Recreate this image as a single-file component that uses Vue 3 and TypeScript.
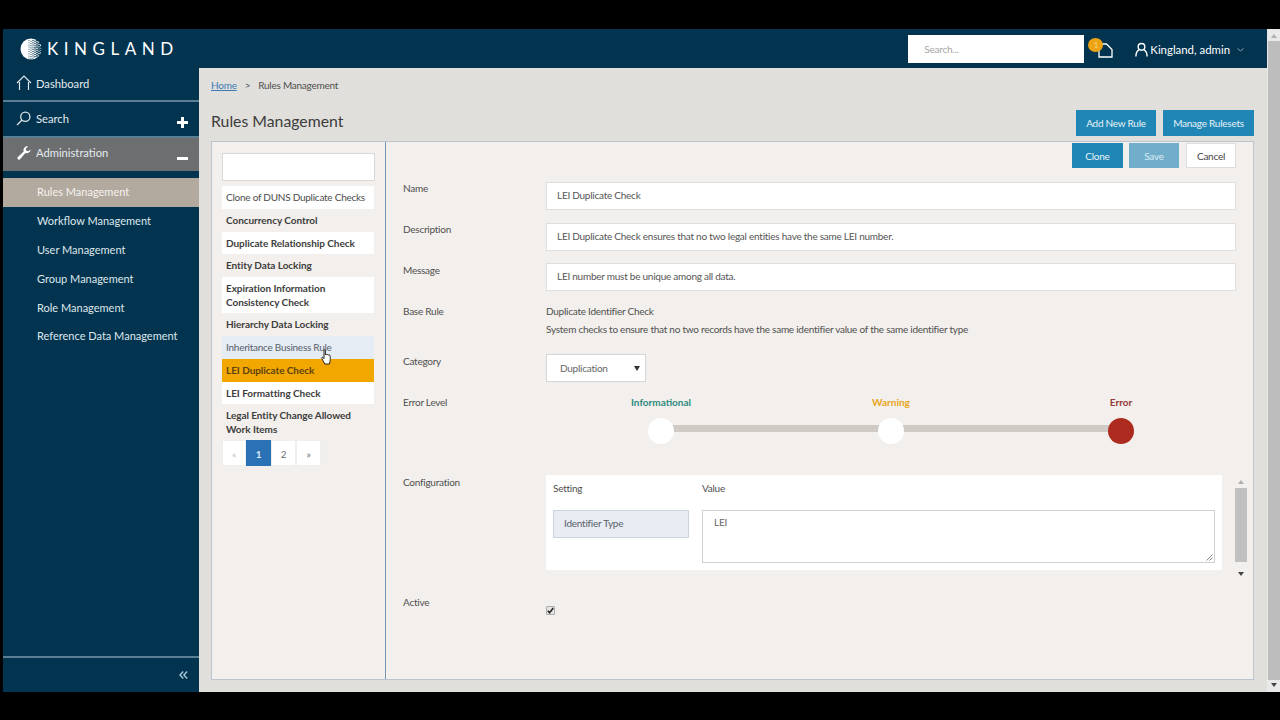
<template>
  <div class="screen">
    <div class="window">
      <header class="topbar">
        <div class="logo">
          <svg class="globe" width="22" height="22" viewBox="0 0 22 22">
            <circle cx="11" cy="11" r="10.500" fill="#fff" />
            <g fill="#02344f">
              <template v-for="d in globeDots" :key="d.k">
                <circle :cx="d.x" :cy="d.y" :r="d.r" />
              </template>
            </g>
          </svg>
          <span class="logo-text">KINGLAND</span>
        </div>
        <div class="top-right">
          <div class="top-search">Search...</div>
          <div class="notice">
            <svg class="doc" width="15" height="15" viewBox="0 0 15 15" fill="none" stroke="#fff" stroke-width="1.300">
              <path d="M1 14V1h7.500L14 6.500V14z" />
            </svg>
            <span class="badge">1</span>
          </div>
          <div class="user">
            <svg width="13" height="16" viewBox="0 0 14 16" fill="none" stroke="#fff" stroke-width="1.500">
              <circle cx="7" cy="4.600" r="3.600" />
              <path d="M1 15c0-4 2-6.500 3.600-7.300M13 15c0-4-2-6.500-3.600-7.300" />
            </svg>
            <span>Kingland, admin</span>
            <svg class="caret" width="7" height="4" viewBox="0 0 7 4" fill="none" stroke="#8ba3b2">
              <path d="M.5.5l3 2.500 3-2.500" />
            </svg>
          </div>
        </div>
      </header>

      <div class="body">
        <aside class="sidebar">
          <div class="nav-row nav-dash">
            <svg width="16" height="16" viewBox="0 0 16 16" fill="none" stroke="#dfe7ec" stroke-width="1.200">
              <path d="M1 8l7-7 7 7M3.500 7v8M12.500 7v8" />
            </svg>
            <span>Dashboard</span>
          </div>
          <div class="nav-row nav-search">
            <svg width="15" height="15" viewBox="0 0 15 15" fill="none" stroke="#dfe7ec" stroke-width="1.300">
              <circle cx="9.300" cy="5.700" r="4.600" />
              <path d="M6 9L1 14" />
            </svg>
            <span>Search</span>
            <b class="sign plus"></b>
          </div>
          <div class="nav-row nav-admin">
            <svg width="14" height="14" viewBox="0 0 14 14" fill="#fff">
              <path d="M13.600 3.400a3.900 3.900 0 0 1-5.200 3.700l-5.100 6a1.600 1.600 0 0 1-2.400-2.200l5.800-5.300A3.900 3.900 0 0 1 11 .4L8.800 2.700l.5 2 2 .5z" />
            </svg>
            <span>Administration</span>
            <b class="sign"></b>
          </div>
          <nav class="subnav">
            <a v-for="item in adminItems" :key="item" class="sub-item" :class="{ current: item === 'Rules Management' }">{{ item }}</a>
          </nav>
          <div class="side-foot">
            <svg width="9" height="8" viewBox="0 0 9 8" fill="none" stroke="#a9c7d8" stroke-width="1.400">
              <path d="M4.300.6L1 4l3.300 3.400M8.200.6L4.900 4l3.300 3.400" />
            </svg>
          </div>
        </aside>

        <main class="main">
          <div class="crumbs">
            <a>Home</a>
            <span class="sep">&gt;</span>
            <span>Rules Management</span>
          </div>
          <div class="title-row">
            <h1>Rules Management</h1>
            <div class="title-btns">
              <button class="btn primary wide add">Add New Rule</button>
              <button class="btn primary wide manage">Manage Rulesets</button>
            </div>
          </div>

          <section class="panel">
            <div class="rule-list">
              <div class="list-search"></div>
              <div
                v-for="(rule, i) in rules"
                :key="rule.name"
                class="rule"
                :class="[rule.state, i % 2 === 0 ? 'odd' : '']"
              >{{ rule.name }}</div>
              <div class="pager">
                <span class="page off">«</span>
                <span class="page on">1</span>
                <span class="page">2</span>
                <span class="page">»</span>
              </div>
              <svg class="pointer" width="11" height="16" viewBox="0 0 11 16">
                <path d="M3 1.200c0-.8 1.400-.8 1.400 0V6c.2-.8 1.500-.7 1.600 0 .2-.6 1.400-.6 1.500.2.300-.5 1.400-.4 1.500.4.400 2 .5 5-.6 8.400H3.800C3 13.200 1.500 11 .8 9.400c-.4-.9.600-1.500 1.200-.9L3 9.700z" fill="#fff" stroke="#111" stroke-width=".9" />
              </svg>
            </div>

            <div class="detail">
              <div class="actions">
                <button class="btn primary">Clone</button>
                <button class="btn primary muted">Save</button>
                <button class="btn plain">Cancel</button>
              </div>

              <div class="field f-name">
                <label>Name</label>
                <div class="input">LEI Duplicate Check</div>
              </div>
              <div class="field f-desc">
                <label>Description</label>
                <div class="input">LEI Duplicate Check ensures that no two legal entities have the same LEI number.</div>
              </div>
              <div class="field f-msg">
                <label>Message</label>
                <div class="input">LEI number must be unique among all data.</div>
              </div>
              <div class="field f-base">
                <label>Base Rule</label>
                <div class="base-text">
                  <p>Duplicate Identifier Check</p>
                  <p>System checks to ensure that no two records have the same identifier value of the same identifier type</p>
                </div>
              </div>
              <div class="field f-cat">
                <label>Category</label>
                <div class="select">
                  <span>Duplication</span>
                  <i class="arrow"></i>
                </div>
              </div>
              <div class="field f-level">
                <label>Error Level</label>
                <div class="levels">
                  <div class="track"></div>
                  <div v-for="l in levels" :key="l.name" class="stop" :class="l.cls">
                    <span class="stop-name">{{ l.name }}</span>
                    <span class="knob"></span>
                  </div>
                </div>
              </div>
              <div class="field f-config">
                <label>Configuration</label>
                <div class="config-wrap">
                  <div class="config">
                    <div class="col-setting">
                      <div class="col-head">Setting</div>
                      <div class="setting-box">Identifier Type</div>
                    </div>
                    <div class="col-value">
                      <div class="col-head">Value</div>
                      <div class="value-box">
                        LEI
                        <svg class="grip" width="7" height="7" viewBox="0 0 7 7" stroke="#888" fill="none">
                          <path d="M.5 6.500l6-6M3.500 6.500l3-3" />
                        </svg>
                      </div>
                    </div>
                  </div>
                  <div class="mini-scroll">
                    <i class="up"></i>
                    <div class="mini-thumb"></div>
                    <i class="down"></i>
                  </div>
                </div>
              </div>
              <div class="field f-active">
                <label>Active</label>
                <div class="check">
                  <svg width="7" height="7" viewBox="0 0 7 7" fill="none" stroke="#222" stroke-width="1.500">
                    <path d="M.8 3.800l1.800 2L6.200 1" />
                  </svg>
                </div>
              </div>
            </div>
          </section>
        </main>
      </div>
    </div>

    <div class="page-scroll">
      <i class="up"></i>
      <div class="page-thumb"></div>
      <i class="down"></i>
    </div>
  </div>
</template>

<script setup lang="ts">
interface Rule {
  name: string;
  state?: string;
}

const adminItems = [
  'Rules Management',
  'Workflow Management',
  'User Management',
  'Group Management',
  'Role Management',
  'Reference Data Management',
];

const rules: Rule[] = [
  { name: 'Clone of DUNS Duplicate Checks', state: 'light' },
  { name: 'Concurrency Control' },
  { name: 'Duplicate Relationship Check' },
  { name: 'Entity Data Locking' },
  { name: 'Expiration Information Consistency Check' },
  { name: 'Hierarchy Data Locking' },
  { name: 'Inheritance Business Rule', state: 'hover' },
  { name: 'LEI Duplicate Check', state: 'selected' },
  { name: 'LEI Formatting Check' },
  { name: 'Legal Entity Change Allowed Work Items' },
];

const levels = [
  { name: 'Informational', cls: 'info' },
  { name: 'Warning', cls: 'warn' },
  { name: 'Error', cls: 'err' },
];

// dotted right half of the globe mark
const globeDots: { k: string; x: number; y: number; r: number }[] = [];
for (let col = 0; col < 7; col++) {
  for (let row = 0; row < 9; row++) {
    const x = 9 + col * 2;
    const y = 2.5 + row * 2.200 + (col % 2) * 0.8;
    if (Math.hypot(x - 11, y - 11) < 10.500) {
      globeDots.push({ k: `${col}-${row}`, x, y, r: 0.5 + col * 0.1 });
    }
  }
}
</script>

<style>
html,
body {
  margin: 0;
  background: #000;
}
</style>

<style scoped>
.screen {
  width: 1280px;
  height: 720px;
  box-sizing: border-box;
  padding: 29px 0 28px 3px;
  background: #000;
  display: flex;
  font-family: "Lato", "Liberation Sans", sans-serif;
  font-size: 10px;
  letter-spacing: -0.25px;
  color: #4a4a4a;
  overflow: hidden;
}

.window {
  width: 1264px;
  display: flex;
  flex-direction: column;
}

.topbar {
  height: 39px;
  flex: none;
  background: #02344f;
  display: flex;
  justify-content: space-between;
  align-items: center;
}

.logo {
  display: flex;
  align-items: center;
  margin-left: 17px;
  color: #fff;
}

.logo-text {
  margin-left: 5px;
  font-size: 17px;
  letter-spacing: 5.500px;
  font-weight: 400;
}

.top-right {
  display: flex;
  align-items: center;
  height: 100%;
}

.top-search {
  width: 176px;
  height: 28px;
  line-height: 28px;
  box-sizing: border-box;
  padding-left: 16px;
  background: #fff;
  color: #a5a5a5;
}

.notice {
  width: 29px;
  height: 28px;
  position: relative;
  display: flex;
  align-items: flex-end;
  justify-content: flex-end;
}

.doc {
  margin-bottom: 5px;
}

.badge {
  position: absolute;
  left: 4px;
  top: 3px;
  width: 15px;
  height: 14px;
  border-radius: 50%;
  background: #eda414;
  color: #f5d27f;
  font-size: 8px;
  line-height: 14px;
  text-align: center;
}

.user {
  margin: 2px 23px 0 22px;
  display: flex;
  align-items: center;
  color: #fff;
  font-size: 11.400px;
  letter-spacing: 0;
}

.user span {
  margin-left: 2px;
}

.caret {
  margin-left: 7px;
}

.body {
  flex: 1;
  display: flex;
  min-height: 0;
}

.sidebar {
  width: 196px;
  flex: none;
  background: #02344f;
  display: flex;
  flex-direction: column;
}

.nav-row {
  display: flex;
  align-items: center;
  box-sizing: border-box;
  padding-left: 13px;
  color: #e4ebef;
  font-size: 11.200px;
  letter-spacing: 0;
}

.nav-row span {
  margin-left: 4px;
}

.nav-dash {
  height: 34px;
  border-bottom: 2px solid #5a7f95;
  padding-bottom: 2px;
}

.nav-search {
  height: 34px;
  position: relative;
  padding-bottom: 2px;
}

.nav-search span {
  margin-left: 5px;
}

.nav-admin {
  height: 35px;
  position: relative;
  background: #6d6e70;
  border-top: 2px solid #5a7f95;
  padding-bottom: 4px;
  padding-left: 14px;
}

.nav-admin span {
  margin-left: 5px;
}

.sign {
  position: absolute;
  left: 174px;
  top: 19px;
  width: 11px;
  height: 3px;
  background: #fff;
}

.sign.plus::after {
  content: "";
  position: absolute;
  left: 4px;
  top: -4px;
  width: 3px;
  height: 11px;
  background: #fff;
}

.subnav {
  margin-top: 7px;
  display: flex;
  flex-direction: column;
}

.sub-item {
  height: 28.900px;
  line-height: 28.900px;
  padding-left: 34px;
  color: #dfe7ec;
  font-size: 11px;
  letter-spacing: 0;
}

.sub-item.current {
  background: #b3aa9f;
  color: #f5f2ee;
}

.side-foot {
  margin-top: auto;
  height: 36px;
  box-sizing: border-box;
  border-top: 2px solid #5a7f95;
  display: flex;
  align-items: center;
  justify-content: flex-end;
  padding-right: 11px;
}

.main {
  flex: 1;
  background: #e0dfdb;
  box-sizing: border-box;
  padding: 0 13px 12px 12px;
  display: flex;
  flex-direction: column;
  min-width: 0;
}

.crumbs {
  height: 34px;
  display: flex;
  align-items: center;
  color: #4f4f4f;
}

.crumbs a {
  color: #3a7ab5;
  text-decoration: underline;
}

.sep {
  margin: 0 8px;
}

.title-row {
  height: 39px;
  box-sizing: border-box;
  padding-bottom: 5px;
  display: flex;
  justify-content: space-between;
  align-items: flex-end;
}

h1 {
  margin: 0 0 6px;
  font-size: 15.800px;
  font-weight: 400;
  letter-spacing: 0;
  color: #3c3c3c;
}

.title-btns {
  display: flex;
  gap: 7px;
}

.btn {
  height: 25px;
  box-sizing: border-box;
  border: 0;
  padding: 0;
  font-family: inherit;
  font-size: 10px;
  letter-spacing: -0.25px;
}

.btn.primary {
  width: 51px;
  background: #1f86b5;
  color: #e9f3f8;
}

.btn.wide {
  height: 26px;
}

.btn.add {
  width: 80px;
}

.btn.manage {
  width: 91px;
}

.btn.muted {
  width: 50px;
  margin-right: 1px;
  background: #70aecb;
  color: #dcecf3;
}

.btn.plain {
  width: 50px;
  background: #fff;
  border: 1px solid #ddd;
  color: #444;
}

.panel {
  flex: 1;
  display: flex;
  min-height: 0;
  background: #f3efec;
  border: 1px solid #bcc5cf;
}

.rule-list {
  width: 174px;
  flex: none;
  box-sizing: border-box;
  padding: 11px 10px 0 10px;
  border-right: 1px solid #7396b5;
  position: relative;
}

.list-search {
  width: 153px;
  height: 28px;
  box-sizing: border-box;
  background: #fff;
  border: 1px solid #d8d8d8;
  margin-bottom: 5px;
}

.rule {
  width: 152px;
  box-sizing: border-box;
  padding: 4px 4px;
  min-height: 22.800px;
  line-height: 14px;
  font-weight: 700;
  letter-spacing: -0.05px;
  color: #3d3d3d;
}

.rule.odd {
  background: #fff;
}

.rule.light {
  font-weight: 400;
  letter-spacing: -0.25px;
  color: #4c4c4c;
}

.rule.hover {
  background: #e6ecf4;
  font-weight: 400;
  letter-spacing: -0.25px;
  color: #56606a;
}

.rule.selected {
  background: #f2a700;
  color: #5b4210;
}

.pager {
  display: flex;
  height: 26px;
}

.page {
  width: 23px;
  line-height: 26px;
  text-align: center;
  background: #fff;
  border: 1px solid #eee;
  height: 24px;
  color: #68707a;
}

.page:first-child {
  width: 22px;
}

.page.off {
  color: #c4c4c4;
}

.page.on {
  background: #2a72b5;
  border-color: #2a72b5;
  color: #dfeaf5;
  font-weight: 700;
}

.pointer {
  position: absolute;
  left: 109px;
  top: 207px;
}

.detail {
  flex: 1;
  min-width: 0;
  box-sizing: border-box;
  padding: 0 17px 0 17px;
}

.actions {
  height: 40px;
  display: flex;
  justify-content: flex-end;
  align-items: flex-start;
  gap: 6px;
  padding-top: 1px;
  box-sizing: border-box;
}

.field {
  display: grid;
  grid-template-columns: 143px 1fr;
}

.field label {
  line-height: 14px;
  color: #4f4f4f;
}

.f-name label,
.f-desc label {
  margin-top: -1px;
}

.input {
  height: 28px;
  line-height: 25px;
  box-sizing: border-box;
  padding-left: 10px;
  background: #fff;
  border: 1px solid #dfdfdf;
  color: #555;
}

.f-name,
.f-msg {
  height: 41px;
}

.f-desc {
  height: 40px;
}

.f-base {
  height: 50px;
}

.base-text p {
  margin: 0 0 4px;
  line-height: 14px;
  color: #4f4f4f;
}

.f-cat {
  height: 41px;
}

.select {
  width: 100px;
  height: 28px;
  box-sizing: border-box;
  padding: 0 5px 0 13px;
  display: flex;
  align-items: center;
  justify-content: space-between;
  background: #fff;
  border: 1px solid #d5d5d5;
  color: #666;
}

.arrow {
  width: 0;
  height: 0;
  border: 3px solid transparent;
  border-top: 5px solid #333;
  border-bottom: 0;
}

.f-level {
  height: 80px;
}

.levels {
  margin: 0 0 0 92px;
  width: 506px;
  display: flex;
  justify-content: space-between;
  position: relative;
  align-items: flex-start;
}

.track {
  position: absolute;
  left: 23px;
  right: 23px;
  top: 30px;
  height: 7px;
  background: #cfcbc4;
}

.stop {
  width: 46px;
  position: relative;
  display: flex;
  flex-direction: column;
  align-items: center;
  margin-top: 1px;
}

.stop-name {
  height: 12px;
  line-height: 12px;
  white-space: nowrap;
  font-weight: 700;
  letter-spacing: 0;
}

.knob {
  width: 26px;
  height: 26px;
  margin-top: 10px;
  border-radius: 50%;
  background: #fff;
}

.info .stop-name {
  color: #2e8a80;
}

.warn .stop-name {
  color: #e8a521;
}

.err .stop-name {
  color: #943a3a;
}

.err .knob {
  background: #ad2a1e;
}

.f-config {
  height: 120px;
}

.config-wrap {
  display: flex;
  align-items: flex-start;
}

.config {
  width: 676px;
  height: 95px;
  flex: none;
  box-sizing: border-box;
  padding: 6px 7px 0;
  background: #fff;
  display: flex;
}

.col-setting {
  width: 149px;
  flex: none;
}

.col-head {
  height: 29px;
  line-height: 14px;
  color: #4f4f4f;
}

.setting-box {
  width: 136px;
  height: 28px;
  line-height: 25px;
  box-sizing: border-box;
  padding-left: 10px;
  background: #e8edf4;
  border: 1px solid #ccd3da;
  color: #5a6068;
}

.col-value {
  flex: 1;
}

.value-box {
  height: 53px;
  box-sizing: border-box;
  padding: 4px 11px;
  line-height: 14px;
  background: #fff;
  border: 1px solid #cfcfcf;
  color: #666;
  position: relative;
}

.grip {
  position: absolute;
  right: 1px;
  bottom: 1px;
}

.mini-scroll {
  width: 12px;
  margin: 5px 0 0 13px;
  display: flex;
  flex-direction: column;
  align-items: center;
}

.mini-thumb {
  width: 12px;
  height: 74px;
  margin: 4px 0 10px;
  background: #c0c0c0;
}

.up {
  width: 0;
  height: 0;
  border: 3px solid transparent;
  border-bottom: 4px solid #b0b0b0;
  border-top: 0;
}

.down {
  width: 0;
  height: 0;
  border: 3px solid transparent;
  border-top: 4px solid #444;
  border-bottom: 0;
}

.check {
  width: 9px;
  height: 9px;
  margin-top: 11px;
  box-sizing: border-box;
  border: 1px solid #aaa;
  border-radius: 1px;
  background: #e4e4e4;
  display: flex;
  align-items: center;
  justify-content: center;
}

.page-scroll {
  width: 13px;
  background: #e9e9e9;
  display: flex;
  flex-direction: column;
  align-items: center;
  justify-content: space-between;
  padding: 5px 0;
  box-sizing: border-box;
}

.page-thumb {
  width: 12px;
  flex: 1;
  margin: 3px 0;
  background: #bdbdbd;
}
</style>
